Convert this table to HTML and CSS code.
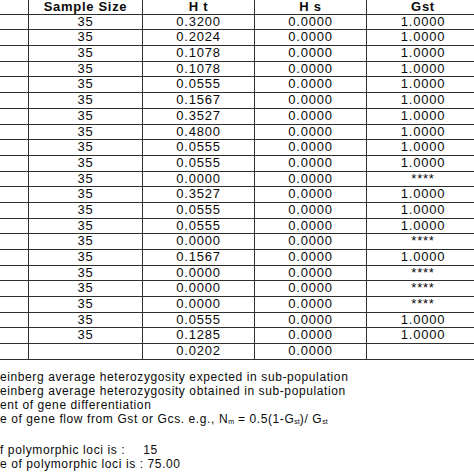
FILE: index.html
```html
<!DOCTYPE html>
<html>
<head>
<meta charset="utf-8">
<link rel="stylesheet" href="styles.css">
</head>
<body>
<div class="sheet">
  <div class="table">
    <div class="row head"><div class="c"></div><div class="c">Sample Size</div><div class="c">H t</div><div class="c">H s</div><div class="c">Gst</div></div>
    <div class="row"><div class="c"></div><div class="c">35</div><div class="c">0.3200</div><div class="c">0.0000</div><div class="c">1.0000</div></div>
    <div class="row"><div class="c"></div><div class="c">35</div><div class="c">0.2024</div><div class="c">0.0000</div><div class="c">1.0000</div></div>
    <div class="row"><div class="c"></div><div class="c">35</div><div class="c">0.1078</div><div class="c">0.0000</div><div class="c">1.0000</div></div>
    <div class="row"><div class="c"></div><div class="c">35</div><div class="c">0.1078</div><div class="c">0.0000</div><div class="c">1.0000</div></div>
    <div class="row"><div class="c"></div><div class="c">35</div><div class="c">0.0555</div><div class="c">0.0000</div><div class="c">1.0000</div></div>
    <div class="row"><div class="c"></div><div class="c">35</div><div class="c">0.1567</div><div class="c">0.0000</div><div class="c">1.0000</div></div>
    <div class="row"><div class="c"></div><div class="c">35</div><div class="c">0.3527</div><div class="c">0.0000</div><div class="c">1.0000</div></div>
    <div class="row"><div class="c"></div><div class="c">35</div><div class="c">0.4800</div><div class="c">0.0000</div><div class="c">1.0000</div></div>
    <div class="row"><div class="c"></div><div class="c">35</div><div class="c">0.0555</div><div class="c">0.0000</div><div class="c">1.0000</div></div>
    <div class="row"><div class="c"></div><div class="c">35</div><div class="c">0.0555</div><div class="c">0.0000</div><div class="c">1.0000</div></div>
    <div class="row"><div class="c"></div><div class="c">35</div><div class="c">0.0000</div><div class="c">0.0000</div><div class="c">****</div></div>
    <div class="row"><div class="c"></div><div class="c">35</div><div class="c">0.3527</div><div class="c">0.0000</div><div class="c">1.0000</div></div>
    <div class="row"><div class="c"></div><div class="c">35</div><div class="c">0.0555</div><div class="c">0.0000</div><div class="c">1.0000</div></div>
    <div class="row"><div class="c"></div><div class="c">35</div><div class="c">0.0555</div><div class="c">0.0000</div><div class="c">1.0000</div></div>
    <div class="row"><div class="c"></div><div class="c">35</div><div class="c">0.0000</div><div class="c">0.0000</div><div class="c">****</div></div>
    <div class="row"><div class="c"></div><div class="c">35</div><div class="c">0.1567</div><div class="c">0.0000</div><div class="c">1.0000</div></div>
    <div class="row"><div class="c"></div><div class="c">35</div><div class="c">0.0000</div><div class="c">0.0000</div><div class="c">****</div></div>
    <div class="row"><div class="c"></div><div class="c">35</div><div class="c">0.0000</div><div class="c">0.0000</div><div class="c">****</div></div>
    <div class="row"><div class="c"></div><div class="c">35</div><div class="c">0.0000</div><div class="c">0.0000</div><div class="c">****</div></div>
    <div class="row"><div class="c"></div><div class="c">35</div><div class="c">0.0555</div><div class="c">0.0000</div><div class="c">1.0000</div></div>
    <div class="row"><div class="c"></div><div class="c">35</div><div class="c">0.1285</div><div class="c">0.0000</div><div class="c">1.0000</div></div>
    <div class="row"><div class="c"></div><div class="c"></div><div class="c">0.0202</div><div class="c">0.0000</div><div class="c"></div></div>
  </div>
  <div class="notes">
    <p>einberg average heterozygosity expected in sub-population</p>
    <p>einberg average heterozygosity obtained in sub-population</p>
    <p>ent of gene differentiation</p>
    <p>e of gene flow from Gst or Gcs. e.g., N<sub>m</sub> = 0.5(1-G<sub>st</sub>)/ G<sub>st</sub></p>
  </div>
  <div class="notes second">
    <p>f polymorphic loci is :<span class="val">15</span></p>
    <p>e of polymorphic loci is : 75.00</p>
  </div>
</div>
</body>
</html>
```

FILE: styles.css
```css
html, body {
  margin: 0;
  padding: 0;
  background: #ffffff;
}
body {
  width: 474px;
  height: 474px;
  overflow: hidden;
}
.sheet {
  width: 480px;
  font-family: "Liberation Sans", Arial, sans-serif;
  color: #0a0a0a;
}
.row {
  display: grid;
  grid-template-columns: 29px 114px 112px 112px 113px;
  height: 15.68px;
  box-sizing: border-box;
  border-bottom: 1px solid #2e2e2e;
}
.row.head {
  height: 14.8px;
  font-weight: bold;
}
.c {
  border-right: 1px solid #2e2e2e;
  text-align: center;
  font-size: 13px;
  letter-spacing: 0.8px;
  line-height: 14.68px;
  white-space: nowrap;
  overflow: hidden;
}
.head .c {
  line-height: 13.8px;
  letter-spacing: 0.7px;
}
.notes {
  margin-top: 10px;
  font-size: 12px;
  letter-spacing: 0.6px;
  line-height: 14px;
  white-space: nowrap;
}
.notes p {
  margin: 0;
}
.notes.second {
  margin-top: 17px;
}
.notes sub {
  font-size: 7px;
  vertical-align: -1px;
  line-height: 0;
  letter-spacing: 0;
}
.val {
  margin-left: 18px;
}
```
